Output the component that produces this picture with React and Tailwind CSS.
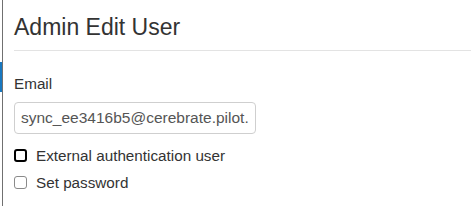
import React from 'react'

function App() {
  return (
    <div className="flex h-[206px] w-[471px] overflow-hidden bg-white font-['Liberation_Sans',Arial,sans-serif] text-[#333]">
      {/* left rail with active marker */}
      <div className="flex w-[3px] shrink-0 flex-col border-r border-[#707070]">
        <div className="h-[62px]"></div>
        <div className="h-[30px] w-[2px] bg-[#1878c0]"></div>
      </div>

      <div className="flex-1 pl-[11px]">
        <h2 className="mt-[13px] text-[23px] leading-[29px] font-normal">Admin Edit User</h2>
        <div className="mt-[8px] h-px bg-[#e3e3e3]"></div>

        <label className="mt-[22px] block text-[15.25px] leading-[22.5px]">Email</label>
        <div className="mt-[6px] flex h-[32px] w-[242px] items-center overflow-hidden rounded-[4px] border border-[#cfcfcf] px-[6px]">
          <span className="whitespace-nowrap text-[15.5px] text-[#555]">sync_ee3416b5@cerebrate.pilot.</span>
        </div>

        <div className="mt-[11px] flex flex-col gap-[4.5px]">
          <div className="flex h-[22.5px] items-center gap-[9px]">
            <span className="block h-[13px] w-[13px] rounded-[3px] border-2 border-black"></span>
            <span className="text-[15.25px] leading-[22.5px]">External authentication user</span>
          </div>
          <div className="flex h-[22.5px] items-center gap-[9px]">
            <span className="block h-[13px] w-[13px] rounded-[3px] border border-[#8a8a8a]"></span>
            <span className="text-[15.25px] leading-[22.5px]">Set password</span>
          </div>
        </div>
      </div>
    </div>
  )
}

export default App
